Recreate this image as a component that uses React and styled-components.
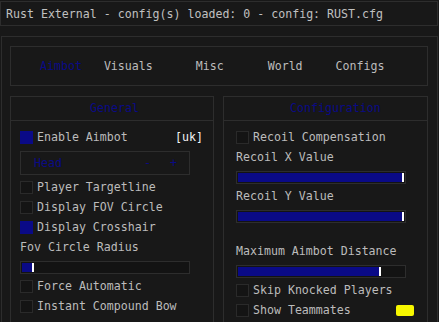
import React from "react";
import styled, { createGlobalStyle } from "styled-components";

const GlobalStyle = createGlobalStyle`
  html, body {
    margin: 0;
    padding: 0;
    background: #181818;
    overflow: hidden;
  }
  body {
    font-family: "DejaVu Sans Mono", "Liberation Mono", monospace;
    font-size: 11.6px;
    color: #bcbcbc;
  }
  * { box-sizing: border-box; }
`;

const NAVY = "#0a0a86";
const BORDER = "#2d2d2d";

const Page = styled.div`
  width: 439px;
  height: 322px;
  padding-top: 1px;
`;

const TitleBar = styled.div`
  width: 438px;
  height: 25px;
  border: 1px solid ${BORDER};
  display: flex;
  align-items: center;
  padding-left: 5px;
  color: #c0c0c0;
  white-space: pre;
`;

const Window = styled.div`
  margin-top: 10px;
  margin-left: 1px;
  width: 437px;
  height: 300px;
  border: 1px solid ${BORDER};
  border-bottom: none;
  padding: 9px 9px 0 8px;
`;

const TabBar = styled.div`
  height: 40px;
  border: 1px solid ${BORDER};
  display: flex;
  align-items: center;
  padding-left: 29px;
`;

const Tab = styled.span`
  margin-left: ${(p) => p.$gap || 0}px;
  color: ${(p) => (p.$active ? NAVY : "#bcbcbc")};
  white-space: pre;
`;

const Columns = styled.div`
  display: flex;
  gap: 9px;
  margin-top: 10px;
`;

const Panel = styled.div`
  width: ${(p) => p.$w}px;
  height: 240px;
  border: 1px solid ${BORDER};
`;

const PanelHeader = styled.div`
  height: 24px;
  border-bottom: 1px solid ${BORDER};
  display: flex;
  align-items: center;
  padding-left: ${(p) => p.$pad}px;
  padding-bottom: 2px;
  color: ${NAVY};
`;

const PanelBody = styled.div`
  padding: 6px 0 0 ${(p) => p.$pad}px;
  display: flex;
  flex-direction: column;
`;

const Row = styled.div`
  height: 20px;
  display: flex;
  align-items: center;
  white-space: pre;
`;

const Box = styled.span`
  width: 13px;
  height: 13px;
  flex: none;
  margin-right: 4px;
  background: ${(p) => (p.$on ? NAVY : "#141414")};
  border: 1px solid ${(p) => (p.$on ? NAVY : "#2a2a2a")};
`;

const Key = styled.span`
  margin-left: auto;
  margin-right: 10px;
  color: #f4f4f4;
`;

const Combo = styled.div`
  width: 170px;
  height: 24px;
  margin: 4px 0 2px;
  border: 1px solid ${BORDER};
  display: flex;
  align-items: center;
  padding: 0 12px 1px 13px;
  color: ${NAVY};
`;

const ComboBtn = styled.span`
  margin-left: ${(p) => (p.$auto ? "auto" : `${p.$gap}px`)};
`;

const Slider = styled.div`
  width: 170px;
  height: 13px;
  margin: 4px 0 2px;
  border: 1px solid ${BORDER};
  background: #131313;
  padding: 1px;
  display: flex;
  align-items: stretch;
`;

const Fill = styled.div`
  background: ${NAVY};
  display: flex;
  justify-content: flex-end;
`;

const Grab = styled.div`
  width: 2px;
  background: #ffffff;
`;

const Spacer = styled.div`
  height: ${(p) => p.$h}px;
`;

const Swatch = styled.span`
  margin-left: auto;
  margin-right: 13px;
  width: 18px;
  height: 11px;
  border-radius: 2px;
  background: #f7f700;
`;

const Check = ({ on, children, extra }) => (
  <Row>
    <Box $on={on} />
    {children}
    {extra}
  </Row>
);

const SliderBar = ({ value }) => (
  <Slider>
    <Fill style={{ width: value }}>
      <Grab />
    </Fill>
  </Slider>
);

export default function App() {
  return (
    <Page>
      <GlobalStyle />
      <TitleBar>Rust External - config(s) loaded: 0 - config: RUST.cfg</TitleBar>
      <Window>
        <TabBar>
          <Tab $active>Aimbot</Tab>
          <Tab $gap={22}>Visuals</Tab>
          <Tab $gap={43}>Misc</Tab>
          <Tab $gap={44}>World</Tab>
          <Tab $gap={33}>Configs</Tab>
        </TabBar>
        <Columns>
          <Panel $w={204}>
            <PanelHeader $pad={79}>General</PanelHeader>
            <PanelBody $pad={9}>
              <Check on extra={<Key>[uk]</Key>}>Enable Aimbot</Check>
              <Combo>
                <span>Head</span>
                <ComboBtn $auto>-</ComboBtn>
                <ComboBtn $gap={19}>+</ComboBtn>
              </Combo>
              <Check>Player Targetline</Check>
              <Check>Display FOV Circle</Check>
              <Check on>Display Crosshair</Check>
              <Row>Fov Circle Radius</Row>
              <SliderBar value={12} />
              <Check>Force Automatic</Check>
              <Check>Instant Compound Bow</Check>
            </PanelBody>
          </Panel>
          <Panel $w={205}>
            <PanelHeader $pad={66}>Configuration</PanelHeader>
            <PanelBody $pad={12}>
              <Check>Recoil Compensation</Check>
              <Row>Recoil X Value</Row>
              <SliderBar value={168} />
              <Row>Recoil Y Value</Row>
              <SliderBar value={168} />
              <Spacer $h={16} />
              <Row>Maximum Aimbot Distance</Row>
              <SliderBar value={143} />
              <Check>Skip Knocked Players</Check>
              <Check extra={<Swatch />}>Show Teammates</Check>
            </PanelBody>
          </Panel>
        </Columns>
      </Window>
    </Page>
  );
}
